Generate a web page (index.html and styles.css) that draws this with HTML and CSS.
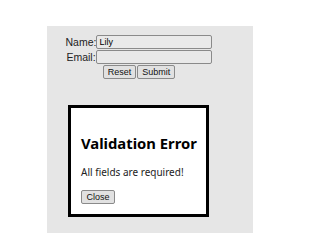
FILE: index.html
```html
<!DOCTYPE html>
<html lang="en">
<head>
    <meta charset="UTF-8">
    <title>Form</title>
    <link rel="stylesheet" href="styles.css">
</head>
<body>
    <div class="panel">
        <form class="user-form">
            <div class="row"><label>Name:</label><input type="text" value="Lily"></div>
            <div class="row"><label>Email:</label><input type="text" value=""></div>
            <div class="row buttons"><button type="reset">Reset</button><button type="submit">Submit</button></div>
        </form>

        <div class="modal">
            <h2>Validation Error</h2>
            <p>All fields are required!</p>
            <button class="close-btn">Close</button>
        </div>
    </div>
</body>
</html>
```

FILE: styles.css
```css
body {
    margin: 0;
    background: #fff;
    font-family: 'Liberation Sans', Arial, sans-serif;
}
.panel {
    margin: 26px 0 0 47px;
    width: 206px;
    height: 198px;
    padding-top: 9px;
    background-color: #e6e6e6;
}
.user-form {
    width: 184px;
    text-align: center;
}
.row {
    height: 15px;
    font-size: 10.5px;
    color: #222;
}
.row label {
    vertical-align: top;
    line-height: 14px;
}
.row input {
    box-sizing: border-box;
    width: 116px;
    height: 14px;
    margin: 0;
    padding: 0 2px;
    border: 1px solid #8a8a8a;
    border-radius: 2px;
    background: #e9e9e9;
    font-family: 'Liberation Sans', Arial, sans-serif;
    font-size: 9px;
    vertical-align: top;
}
.buttons button,
.close-btn {
    box-sizing: border-box;
    height: 14px;
    margin: 0;
    padding: 0 4px;
    border: 1px solid #8a8a8a;
    border-radius: 2px;
    background: #e1e1e1;
    font-family: 'Liberation Sans', Arial, sans-serif;
    font-size: 9px;
    color: #111;
    vertical-align: top;
}
.buttons button + button {
    margin-left: 1px;
}
.modal {
    margin: 25px 0 0 21px;
    width: 141px;
    height: 112px;
    box-sizing: border-box;
    padding: 0 0 0 10px;
    border: 3px solid #000;
    background: #fff;
    font-family: 'Noto Sans', sans-serif;
}
.modal h2 {
    margin: 25px 0 0;
    font-size: 14.8px;
    font-weight: bold;
    line-height: 21px;
    white-space: nowrap;
}
.modal p {
    margin: 11px 0 0;
    font-size: 10px;
    line-height: 14px;
    color: #222;
}
.close-btn {
    margin-top: 11px;
    width: 34px;
    padding: 0;
}
```
